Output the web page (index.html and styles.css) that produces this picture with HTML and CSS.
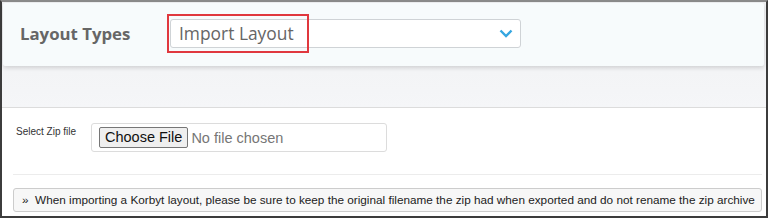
FILE: index.html
```html
<!doctype html>
<html lang="en">
<head>
    <meta charset="UTF-8">
    <title>Import Layout</title>
    <link rel="stylesheet" href="styles.css">
</head>
<body>
    <div class="frame">
        <div class="top">
            <div class="card">
                <div class="card-title">Layout Types</div>
                <div class="select">
                    <span class="select-value">Import Layout</span>
                    <svg class="chevron" width="14" height="9" viewBox="0 0 14 9">
                        <path d="M1.5 1.5 L7 7 L12.5 1.5" fill="none" stroke="#35a6e0" stroke-width="2.4"/>
                    </svg>
                    <div class="highlight"></div>
                </div>
            </div>
        </div>
        <div class="content">
            <div class="field">
                <label class="field-label">Select Zip file</label>
                <div class="file-box">
                    <span class="file-btn">Choose File</span>
                    <span class="file-name">No file chosen</span>
                </div>
            </div>
            <div class="divider"></div>
            <div class="note">&raquo;&nbsp; When importing a Korbyt layout, please be sure to keep the original filename the zip had when exported and do not rename the zip archive</div>
        </div>
    </div>
</body>
</html>
```

FILE: styles.css
```css
* {
    margin: 0;
    padding: 0;
    box-sizing: border-box;
}

body {
    width: 768px;
    height: 218px;
    overflow: hidden;
    background: #fff;
    font-family: "Liberation Sans", Arial, sans-serif;
}

.frame {
    height: 218px;
    border-top: 2px solid #8a8a8a;
    border-left: 2px solid #3c3c3c;
    border-right: 2px solid #3c3c3c;
    border-bottom: 2px solid #3c3c3c;
    display: flex;
    flex-direction: column;
}

.top {
    height: 106px;
    background: linear-gradient(#eff0f2, #f5f6f8);
    border-bottom: 1px solid #dcdcdc;
    padding: 1px 2px 0 1px;
}

.card {
    height: 63px;
    background: #f7fbfc;
    border-radius: 2px;
    box-shadow: 0 2px 4px rgba(0, 0, 0, 0.14);
    display: flex;
    align-items: center;
    padding: 0 0 3px 17px;
}

.card-title {
    font-family: "Open Sans", sans-serif;
    font-weight: 700;
    font-size: 16.8px;
    color: #666;
    width: 150px;
}

.select {
    position: relative;
    width: 351px;
    height: 29px;
    background: #fff;
    border: 1px solid #cfd3d6;
    border-radius: 3px;
    display: flex;
    align-items: center;
    justify-content: space-between;
    padding: 0 6px 0 8px;
}

.select-value {
    font-family: "Open Sans", sans-serif;
    font-size: 17.4px;
    color: #666;
}

.chevron {
    margin-right: 1px;
}

.highlight {
    position: absolute;
    left: -4px;
    top: -6px;
    width: 142px;
    height: 39px;
    border: 2px solid #e0383e;
}

.content {
    flex: 1;
    padding: 15px 4px 0 11px;
}

.field {
    display: flex;
    align-items: flex-start;
    padding-left: 3px;
}

.field-label {
    font-size: 10px;
    color: #333;
    width: 75px;
    padding-top: 3px;
}

.file-box {
    width: 296px;
    height: 29px;
    border: 1px solid #dcdcdc;
    border-radius: 3px;
    display: flex;
    align-items: center;
    padding-left: 7px;
}

.file-btn {
    font-size: 14.5px;
    color: #111;
    background: #efefef;
    border: 1px solid #767676;
    border-radius: 2px;
    padding: 1px 5px 1px 5px;
    line-height: 17px;
}

.file-name {
    font-size: 14.5px;
    color: #767676;
    margin-left: 3px;
}

.divider {
    height: 1px;
    background: #ececec;
    margin: 22px 0 13px 0;
}

.note {
    height: 24px;
    border: 1px solid #cccccc;
    border-radius: 3px;
    background: #f7f7f7;
    font-size: 11.75px;
    color: #222;
    line-height: 22px;
    padding-left: 8px;
    white-space: nowrap;
}
```
